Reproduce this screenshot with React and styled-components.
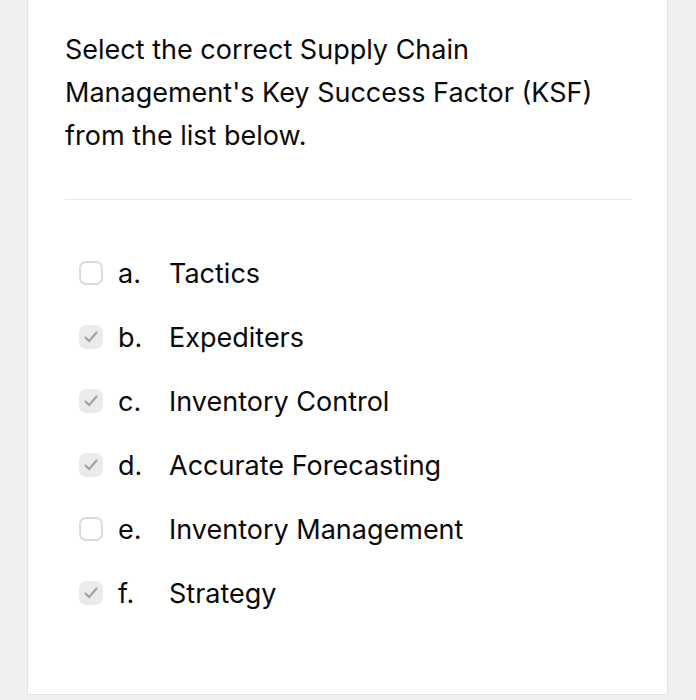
import React from 'react';
import styled, { createGlobalStyle } from 'styled-components';

const GlobalStyle = createGlobalStyle`
  html, body {
    margin: 0;
    padding: 0;
    background: #f0f0f3;
  }
  body {
    font-family: Inter, "Liberation Sans", Arial, sans-serif;
    color: #0a0a0a;
  }
`;

const Page = styled.div`
  width: 696px;
  height: 700px;
  display: flex;
  align-items: flex-start;
  padding-left: 27px;
  box-sizing: border-box;
`;

const Card = styled.div`
  width: 641px;
  height: 695px;
  box-sizing: border-box;
  background: #fff;
  border: 1px solid #e2e2e8;
  border-top: none;
  padding: 28px 35px 0 37px;
`;

const Question = styled.p`
  margin: 0;
  font-size: 27px;
  line-height: 43px;
`;

const Divider = styled.hr`
  border: none;
  border-top: 1px solid #e8e8ea;
  margin: 42px 0 0;
`;

const Options = styled.div`
  display: flex;
  flex-direction: column;
  padding-top: 51px;
  gap: 20px;
`;

const Option = styled.label`
  display: flex;
  align-items: center;
  height: 44px;
  font-size: 27px;
`;

const Box = styled.span`
  width: 24px;
  height: 24px;
  margin-left: 14px;
  border-radius: 7px;
  box-sizing: border-box;
  display: flex;
  align-items: center;
  justify-content: center;
  background: ${p => (p.checked ? '#ebebee' : '#fff')};
  border: ${p => (p.checked ? 'none' : '2px solid #dcdce0')};
`;

const Letter = styled.span`
  width: 51px;
  margin-left: 15px;
`;

const Check = () => (
  <svg width="18" height="18" viewBox="0 0 18 18">
    <path d="M3.5 9.5 L7.2 13.2 L14.5 4.5" fill="none" stroke="#a0a0a6" strokeWidth="2.1" strokeLinecap="round" strokeLinejoin="round" />
  </svg>
);

const options = [
  { letter: 'a.', text: 'Tactics', checked: false },
  { letter: 'b.', text: 'Expediters', checked: true },
  { letter: 'c.', text: 'Inventory Control', checked: true },
  { letter: 'd.', text: 'Accurate Forecasting', checked: true },
  { letter: 'e.', text: 'Inventory Management', checked: false },
  { letter: 'f.', text: 'Strategy', checked: true },
];

export default function App() {
  return (
    <Page>
      <GlobalStyle />
      <Card>
        <Question>
          Select the correct Supply Chain
          <br />
          Management's Key Success Factor (KSF)
          <br />
          from the list below.
        </Question>
        <Divider />
        <Options>
          {options.map(o => (
            <Option key={o.letter}>
              <Box checked={o.checked}>{o.checked && <Check />}</Box>
              <Letter>{o.letter}</Letter>
              <span>{o.text}</span>
            </Option>
          ))}
        </Options>
      </Card>
    </Page>
  );
}
